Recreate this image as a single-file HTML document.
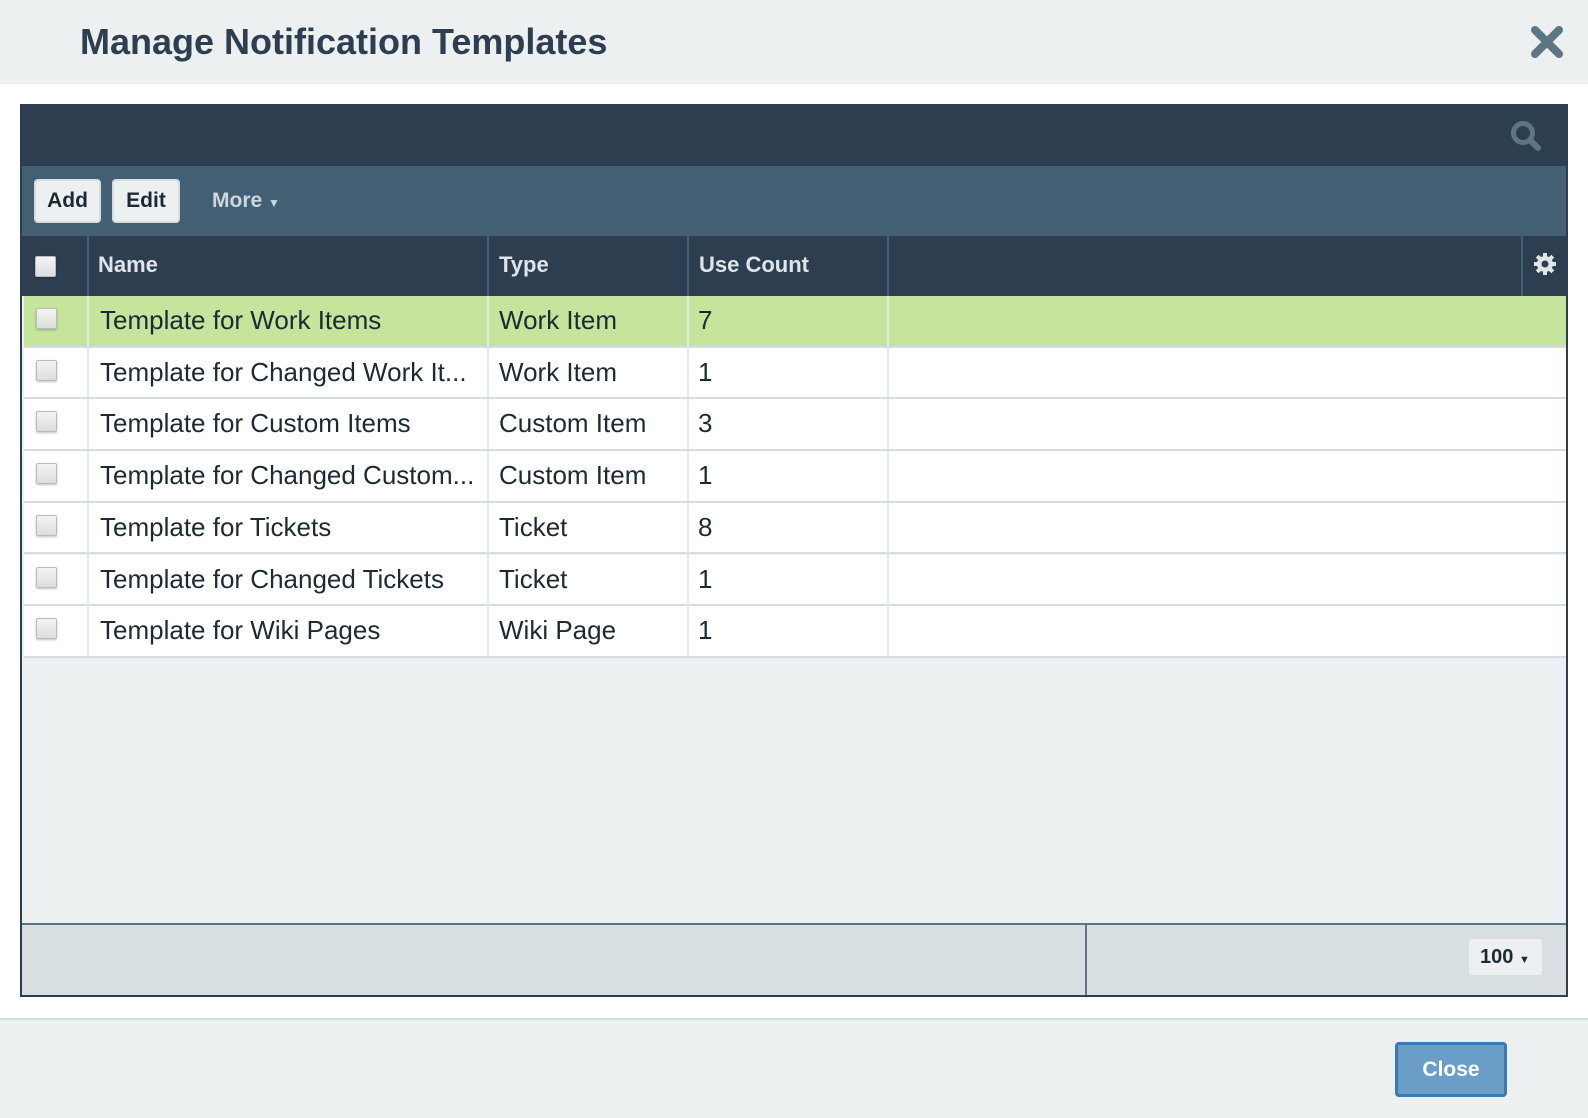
<!DOCTYPE html>
<html><head><style>
*{margin:0;padding:0;box-sizing:border-box}
body{width:1588px;height:1118px;background:#fff;font-family:"Liberation Sans",Arial,sans-serif;position:relative;overflow:hidden}
.hdr{position:absolute;left:0;top:0;width:1588px;height:84px;background:#ecf0f1}
.title{position:absolute;left:80px;top:21px;font-size:36px;font-weight:bold;color:#2c3e50}
.x{position:absolute;left:1531px;top:26px}
.tbl{position:absolute;left:20px;top:104px;width:1548px;height:893px;border:2px solid #2c3e50;border-top:none;background:#ecf0f1;overflow:hidden}
.dark{position:absolute;left:0;top:0;width:1546px;height:62px;background:#2c3e50}
.tool{position:absolute;left:0;top:62px;width:1544px;height:70px;background:#435f74}
.btn{position:absolute;top:13px;height:44px;background:#ecf0f1;border:2px solid #d5dde0;border-radius:4px;font-weight:bold;font-size:21px;color:#1e2a33;text-align:center;line-height:40px}
.more{position:absolute;left:190px;top:23px;font-size:21px;font-weight:bold;color:#cbd6dd}
.head{position:absolute;left:0;top:132px;width:1546px;height:60px;background:#2c3e50}
.hc{position:absolute;top:16px;font-size:22px;font-weight:bold;color:#dfe6ea}
.vl{position:absolute;top:0;width:2px;height:60px;background:#435f74}
.row{position:absolute;left:2px;width:1542px;height:51.7px;background:#fff;border-bottom:2px solid #d5dde0}
.row.sel{background:#c5e49c}
.row span{position:absolute;top:9px;font-size:26px;color:#1e2a33}
.row i{position:absolute;top:0;width:2px;height:50px;background:#e5eaec}
.cb{position:absolute;left:12px;top:12px;width:21px;height:21px;border:1px solid #bbb;border-radius:2px;background:linear-gradient(#f4f4f4,#ddd);box-shadow:0 1px 2px rgba(0,0,0,.25)}
.foot{position:absolute;left:0;top:819px;width:1546px;height:72px;background:#d7dfe1;border-top:2px solid #5e7585}
.pg{position:absolute;left:1447px;top:14px;width:73px;height:36px;background:#ecf0f1;border-radius:3px;font-size:20px;font-weight:bold;color:#1e2a33;line-height:36px;padding-left:11px}
.bot{position:absolute;left:0;top:1018px;width:1588px;height:100px;background:#ecf0f1;border-top:2px solid #d5dde0}
.close{position:absolute;left:1395px;top:22px;width:112px;height:55px;background:#6a9ec7;border:3px solid #3a7ab3;border-radius:4px;color:#fff;font-weight:bold;font-size:21px;text-align:center;line-height:49px}
</style></head><body>
<div class="hdr"><div class="title">Manage Notification Templates</div>
<svg class="x" width="32" height="32" viewBox="0 0 32 32"><path d="M4 4L28 28M28 4L4 28" stroke="#5e7585" stroke-width="8" stroke-linecap="round"/></svg></div>
<div class="tbl">
<div class="dark"><svg style="position:absolute;left:1488px;top:16px" width="34" height="34" viewBox="0 0 34 34"><circle cx="13" cy="13" r="9.5" fill="none" stroke="#5e7585" stroke-width="5"/><path d="M20 20L28 28" stroke="#5e7585" stroke-width="6" stroke-linecap="round"/></svg></div>
<div class="tool"><div class="btn" style="left:12px;width:67px">Add</div><div class="btn" style="left:90px;width:68px">Edit</div><div class="more">More <span style="font-size:12px">▼</span></div></div>
<div class="head">
<div class="cb" style="top:20px;left:13px"></div>
<div class="vl" style="left:65px"></div><div class="vl" style="left:465px"></div><div class="vl" style="left:665px"></div><div class="vl" style="left:865px"></div><div class="vl" style="left:1499px"></div>
<div class="hc" style="left:76px">Name</div><div class="hc" style="left:477px">Type</div><div class="hc" style="left:677px">Use Count</div>
<svg style="position:absolute;left:1511px;top:16px" width="24" height="24" viewBox="0 0 24 24"><g fill="#dfe6ea"><circle cx="12" cy="12" r="8"/><g stroke="#dfe6ea" stroke-width="4"><path d="M12 1v22M1 12h22M4.2 4.2l15.6 15.6M19.8 4.2L4.2 19.8"/></g></g><circle cx="12" cy="12" r="3.5" fill="#2c3e50"/></svg>
</div>
<div class="row sel" style="top:192px"><div class="cb"></div><i style="left:63px"></i><i style="left:463px"></i><i style="left:663px"></i><i style="left:863px"></i><span style="left:76px">Template for Work Items</span><span style="left:475px">Work Item</span><span style="left:674px">7</span></div>
<div class="row" style="top:243.7px"><div class="cb"></div><i style="left:63px"></i><i style="left:463px"></i><i style="left:663px"></i><i style="left:863px"></i><span style="left:76px">Template for Changed Work It...</span><span style="left:475px">Work Item</span><span style="left:674px">1</span></div>
<div class="row" style="top:295.4px"><div class="cb"></div><i style="left:63px"></i><i style="left:463px"></i><i style="left:663px"></i><i style="left:863px"></i><span style="left:76px">Template for Custom Items</span><span style="left:475px">Custom Item</span><span style="left:674px">3</span></div>
<div class="row" style="top:347.1px"><div class="cb"></div><i style="left:63px"></i><i style="left:463px"></i><i style="left:663px"></i><i style="left:863px"></i><span style="left:76px">Template for Changed Custom...</span><span style="left:475px">Custom Item</span><span style="left:674px">1</span></div>
<div class="row" style="top:398.8px"><div class="cb"></div><i style="left:63px"></i><i style="left:463px"></i><i style="left:663px"></i><i style="left:863px"></i><span style="left:76px">Template for Tickets</span><span style="left:475px">Ticket</span><span style="left:674px">8</span></div>
<div class="row" style="top:450.5px"><div class="cb"></div><i style="left:63px"></i><i style="left:463px"></i><i style="left:663px"></i><i style="left:863px"></i><span style="left:76px">Template for Changed Tickets</span><span style="left:475px">Ticket</span><span style="left:674px">1</span></div>
<div class="row" style="top:502.2px"><div class="cb"></div><i style="left:63px"></i><i style="left:463px"></i><i style="left:663px"></i><i style="left:863px"></i><span style="left:76px">Template for Wiki Pages</span><span style="left:475px">Wiki Page</span><span style="left:674px">1</span></div>
<div class="foot"><div style="position:absolute;left:1063px;top:0;width:2px;height:70px;background:#5e7585"></div><div class="pg">100 <span style="font-size:11px">▼</span></div></div>
</div>
<div class="bot"><div class="close">Close</div></div>
</body></html>
